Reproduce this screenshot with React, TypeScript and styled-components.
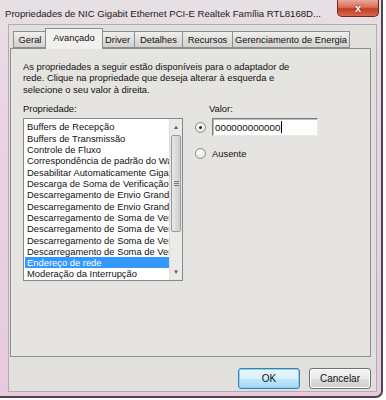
import React from 'react';
import styled, { createGlobalStyle } from 'styled-components';

const GlobalStyle = createGlobalStyle`
  html, body {
    margin: 0;
    padding: 0;
    background: #ffffff;
  }
  body {
    font-family: "Liberation Sans", Arial, sans-serif;
    color: #111;
  }
`;

const Frame = styled.div`
  width: 383px;
  height: 398px;
  box-sizing: border-box;
  background: linear-gradient(180deg, #e6e0e4 0%, #ead3e3 30%, #e8cadf 100%);
  border-right: 2px solid #4e4450;
  border-bottom: 2px solid #4e4450;
  border-radius: 0 0 7px 0;
  display: flex;
  flex-direction: column;
`;

const TitleBar = styled.div`
  height: 24px;
  display: flex;
  align-items: flex-start;
  justify-content: space-between;
`;

const Title = styled.div`
  font-size: 9.6px;
  padding: 8px 0 0 5px;
  color: #1b1b1b;
  white-space: nowrap;
`;

const CloseButton = styled.div`
  width: 42px;
  height: 17px;
  margin-right: 2px;
  box-sizing: border-box;
  border: 1px solid #6e2a22;
  border-top: none;
  border-radius: 0 0 5px 5px;
  background: linear-gradient(180deg, #e9a799 0%, #d7705a 45%, #c43c20 55%, #d8684a 100%);
  display: flex;
  align-items: center;
  justify-content: center;
  color: #fff;
  font-size: 11px;
  font-weight: bold;
  text-shadow: 0 0 2px #5a1a10;
`;

const Client = styled.div`
  flex: 1;
  margin: 0 4px 4px 8px;
  background: #e2e0dc;
  border: 1px solid #b4aab2;
  padding: 3px 5px 0 1px;
  display: flex;
  flex-direction: column;
`;

const TabStrip = styled.div`
  display: flex;
  align-items: flex-end;
  height: 20px;
  padding-left: 3px;
  position: relative;
  z-index: 1;
`;

const Tab = styled.div<{ $active?: boolean; $w: number }>`
  box-sizing: border-box;
  width: ${p => p.$w}px;
  height: ${p => (p.$active ? '21px' : '17px')};
  margin: ${p => (p.$active ? '0 -2px -1px -2px' : '0')};
  padding-top: ${p => (p.$active ? '3px' : '2px')};
  text-align: center;
  border: 1px solid #8c8e94;
  border-bottom: ${p => (p.$active ? 'none' : '1px solid #8c8e94')};
  border-left-width: ${p => (p.$active ? '1px' : '0')};
  background: ${p =>
    p.$active
      ? '#f1f0ee'
      : 'linear-gradient(180deg, #f0efed 0%, #e0dfdc 50%, #d3d2cf 100%)'};
  font-size: 9.4px;
  white-space: nowrap;
  position: relative;
  z-index: ${p => (p.$active ? 2 : 1)};
  &:first-child {
    border-left-width: 1px;
  }
`;

const Panel = styled.div`
  height: 309px;
  box-sizing: border-box;
  border: 1px solid #8c8e94;
  background: #e6e4e0;
  padding: 12px 12px 0 12px;
  display: flex;
  flex-direction: column;
`;

const Intro = styled.p`
  margin: 0;
  font-size: 9.4px;
  line-height: 11.4px;
  white-space: nowrap;
`;

const Columns = styled.div`
  display: flex;
  margin-top: 8px;
`;

const PropertyColumn = styled.div`
  width: 160px;
  display: flex;
  flex-direction: column;
`;

const ValueColumn = styled.div`
  margin-left: 12px;
  display: flex;
  flex-direction: column;
`;

const Label = styled.div<{ $indent?: number }>`
  font-size: 9.4px;
  line-height: 11px;
  margin: 0 0 4px ${p => p.$indent ?? 0}px;
`;

const ListBox = styled.div`
  height: 163px;
  box-sizing: border-box;
  border: 1px solid #828790;
  background: #fff;
  display: flex;
  padding: 2px 0 0 1px;
`;

const Items = styled.div`
  flex: 1;
  overflow: hidden;
`;

const Item = styled.div<{ $selected?: boolean }>`
  height: 11.33px;
  line-height: 11.33px;
  font-size: 9.4px;
  padding-left: 2px;
  white-space: nowrap;
  overflow: hidden;
  background: ${p => (p.$selected ? '#3399ff' : 'transparent')};
  color: ${p => (p.$selected ? '#fff' : '#111')};
`;

const ScrollBar = styled.div`
  width: 12px;
  margin-top: -2px;
  background: #ebeae8;
  border-left: 1px solid #dedcd9;
  display: flex;
  flex-direction: column;
  align-items: stretch;
`;

const ScrollArrow = styled.div`
  height: 16px;
  display: flex;
  align-items: center;
  justify-content: center;
  font-size: 6px;
  color: #555;
`;

const Thumb = styled.div`
  height: 97px;
  margin: 0 1px;
  box-sizing: border-box;
  border: 1px solid #9a9a9a;
  border-radius: 2px;
  background: linear-gradient(90deg, #e9e9e9 0%, #d8d8d8 60%, #cfcfcf 100%);
  display: flex;
  align-items: center;
  justify-content: center;
`;

const Grip = styled.div`
  width: 5px;
  height: 5px;
  border-top: 1px solid #777;
  border-bottom: 1px solid #777;
  box-sizing: border-box;
  position: relative;
  &::after {
    content: '';
    position: absolute;
    left: 0;
    right: 0;
    top: 1px;
    border-top: 1px solid #777;
  }
`;

const Track = styled.div`
  flex: 1;
`;

const RadioRow = styled.div<{ $gapTop?: number }>`
  display: flex;
  align-items: center;
  font-size: 9.4px;
  gap: 2px;
  margin-top: ${p => p.$gapTop ?? 0}px;
`;

const Radio = styled.span<{ $checked?: boolean }>`
  width: 9px;
  height: 9px;
  border-radius: 50%;
  border: 1px solid #8a8a8a;
  background: radial-gradient(circle at 40% 35%, #ffffff 0%, #e4e4e4 80%);
  display: flex;
  align-items: center;
  justify-content: center;
  margin-right: 4px;
  &::after {
    content: '';
    width: 3px;
    height: 3px;
    border-radius: 50%;
    background: ${p => (p.$checked ? '#222' : 'transparent')};
  }
`;

const TextBox = styled.div`
  width: 106px;
  height: 18px;
  box-sizing: border-box;
  border: 1px solid;
  border-color: #7b7b7b #e9e9e9 #e9e9e9 #7b7b7b;
  box-shadow: inset 1px 1px 0 #bdbdbd;
  background: #fdfdfd;
  font-size: 9.8px;
  display: flex;
  align-items: center;
  padding-left: 2px;
`;

const Caret = styled.span`
  display: inline-block;
  width: 1px;
  height: 12px;
  background: #000;
  margin-left: 1px;
`;

const Footer = styled.div`
  display: flex;
  justify-content: flex-end;
  gap: 9px;
  margin-top: 11px;
`;

const Button = styled.div<{ $focused?: boolean }>`
  width: 62px;
  height: 21px;
  box-sizing: border-box;
  border: 1px solid ${p => (p.$focused ? '#3c7fb1' : '#707070')};
  border-radius: 3px;
  background: ${p =>
    p.$focused
      ? 'linear-gradient(180deg, #eaf6fd 0%, #d9f0fc 50%, #bee6fd 51%, #a7d9f5 100%)'
      : 'linear-gradient(180deg, #f2f2f2 0%, #ebebeb 50%, #dddddd 51%, #cfcfcf 100%)'};
  box-shadow: inset 0 0 0 1px ${p => (p.$focused ? '#8fd0f0' : '#fbfbfb')};
  display: flex;
  align-items: center;
  justify-content: center;
  font-size: 10px;
`;

const tabs = [
  { label: 'Geral', w: 34 },
  { label: 'Avançado', w: 58 },
  { label: 'Driver', w: 34 },
  { label: 'Detalhes', w: 48 },
  { label: 'Recursos', w: 50 },
  { label: 'Gerenciamento de Energia', w: 117 },
];

const properties = [
  'Buffers de Recepção',
  'Buffers de Transmissão',
  'Controle de Fluxo',
  'Correspondência de padrão do Wake on LAN',
  'Desabilitar Automaticamente Gigabit',
  'Descarga de Soma de Verificação IPv4',
  'Descarregamento de Envio Grande (IPv4)',
  'Descarregamento de Envio Grande (IPv6)',
  'Descarregamento de Soma de Verificação TCP',
  'Descarregamento de Soma de Verificação UDP',
  'Descarregamento de Soma de Verificação TCP',
  'Descarregamento de Soma de Verificação UDP',
  'Endereço de rede',
  'Moderação da Interrupção',
];

const App: React.FC = () => {
  return (
    <>
      <GlobalStyle />
      <Frame>
        <TitleBar>
          <Title>Propriedades de NIC Gigabit Ethernet PCI-E Realtek Família RTL8168D...</Title>
          <CloseButton>x</CloseButton>
        </TitleBar>
        <Client>
          <TabStrip>
            {tabs.map(t => (
              <Tab key={t.label} $w={t.w} $active={t.label === 'Avançado'}>
                {t.label}
              </Tab>
            ))}
          </TabStrip>
          <Panel>
            <Intro>
              As propriedades a seguir estão disponíveis para o adaptador de
              <br />
              rede. Clique na propriedade que deseja alterar à esquerda e
              <br />
              selecione o seu valor à direita.
            </Intro>
            <Columns>
              <PropertyColumn>
                <Label>Propriedade:</Label>
                <ListBox>
                  <Items>
                    {properties.map((p, i) => (
                      <Item key={i} $selected={p === 'Endereço de rede'}>
                        {p}
                      </Item>
                    ))}
                  </Items>
                  <ScrollBar>
                    <ScrollArrow>▲</ScrollArrow>
                    <Thumb>
                      <Grip />
                    </Thumb>
                    <Track />
                    <ScrollArrow>▼</ScrollArrow>
                  </ScrollBar>
                </ListBox>
              </PropertyColumn>
              <ValueColumn>
                <Label $indent={14}>Valor:</Label>
                <RadioRow>
                  <Radio $checked />
                  <TextBox>
                    000000000000
                    <Caret />
                  </TextBox>
                </RadioRow>
                <RadioRow $gapTop={12}>
                  <Radio />
                  Ausente
                </RadioRow>
              </ValueColumn>
            </Columns>
          </Panel>
          <Footer>
            <Button $focused>OK</Button>
            <Button>Cancelar</Button>
          </Footer>
        </Client>
      </Frame>
    </>
  );
};

export default App;
